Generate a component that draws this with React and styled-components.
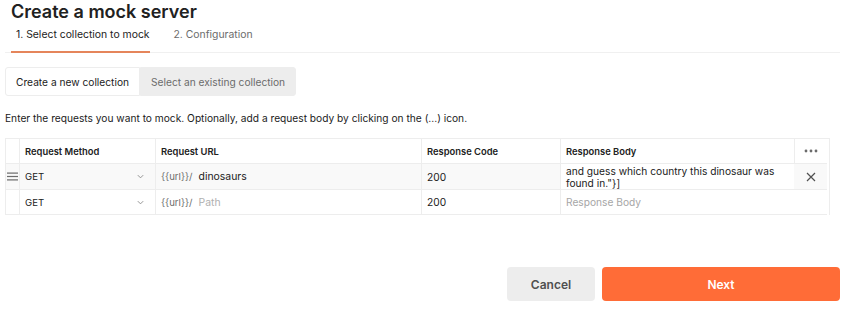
import React from 'react';
import styled, { createGlobalStyle } from 'styled-components';

const Global = createGlobalStyle`
  html, body { margin: 0; padding: 0; background: #fff; }
  body { font-family: Inter, "Noto Sans", sans-serif; color: #212121; }
`;

const Page = styled.div`
  width: 850px;
  height: 311px;
  box-sizing: border-box;
  padding: 0 10px 0 5px;
  display: flex;
  flex-direction: column;
`;

const Title = styled.h1`
  margin: 0;
  padding: 1px 0 0 6px;
  font-size: 18px;
  font-weight: 600;
  line-height: 22px;
  color: #212121;
`;

const Tabs = styled.div`
  display: flex;
  gap: 19px;
  padding-left: 6px;
  border-bottom: 1px solid #f0f0f0;
`;

const Tab = styled.div`
  font-size: 10.4px;
  line-height: 14px;
  padding: 5px 0 9px 5px;
  color: ${(p) => (p.active ? '#212121' : '#6b6b6b')};
  border-bottom: 2px solid ${(p) => (p.active ? '#e5855b' : 'transparent')};
  margin-bottom: -1px;
`;

const Segmented = styled.div`
  display: flex;
  align-self: flex-start;
  margin-top: 14px;
  height: 29px;
`;

const Segment = styled.div`
  display: flex;
  align-items: center;
  padding: 0 ${(p) => (p.active ? '10px' : '10px')};
  font-size: 10.2px;
  box-sizing: border-box;
  color: ${(p) => (p.active ? '#212121' : '#6b6b6b')};
  background: ${(p) => (p.active ? '#fff' : '#ededed')};
  border: 1px solid #ededed;
  border-radius: ${(p) => (p.active ? '3px 0 0 3px' : '0 3px 3px 0')};
`;

const Hint = styled.p`
  margin: 15px 0 0 0;
  font-size: 10.2px;
  line-height: 14px;
  color: #212121;
`;

const Table = styled.div`
  margin-top: 13px;
  width: 823px;
  border: 1px solid #ededed;
  border-bottom: none;
  display: grid;
  grid-template-columns: 13px 136px 266px 139px 234px 33px;
`;

const Cell = styled.div`
  box-sizing: border-box;
  height: ${(p) => p.h || 25}px;
  display: flex;
  align-items: center;
  padding: 0 5px;
  font-size: 10.2px;
  border-bottom: 1px solid #ededed;
  border-left: ${(p) => (p.first ? 'none' : '1px solid #ededed')};
  background: ${(p) => (p.hover ? '#f9f9f9' : '#fff')};
  color: ${(p) => (p.muted ? '#a6a6a6' : '#212121')};
  overflow: hidden;
`;

const HeadCell = styled(Cell)`
  font-weight: 600;
  font-size: 9.4px;
  color: #212121;
`;

const MethodCell = styled(Cell)`
  justify-content: space-between;
  padding-right: 10px;
  font-size: 9.6px;
`;

const Prefix = styled.span`
  color: #6b6b6b;
  font-size: 9.6px;
  margin-right: 6px;
`;

const UrlText = styled.span`
  color: ${(p) => (p.placeholder ? '#b0b0b0' : '#212121')};
  font-size: 10.4px;
`;

const BodyCell = styled(Cell)`
  font-size: 10.2px;
  line-height: 12px;
  align-items: flex-start;
  padding-top: 1px;
  color: #212121;
`;

const IconCell = styled(Cell)`
  justify-content: center;
  padding: 0;
  color: #6b6b6b;
  border-left: ${(p) => (p.noLeft ? 'none' : '1px solid #ededed')};
`;

const Footer = styled.div`
  margin-top: auto;
  display: flex;
  justify-content: flex-end;
  gap: 7px;
  padding-bottom: 10px;
`;

const Button = styled.button`
  height: 34px;
  border: none;
  border-radius: 4px;
  font-family: inherit;
  font-size: 12px;
  font-weight: 600;
  cursor: pointer;
  width: ${(p) => p.w}px;
  background: ${(p) => (p.primary ? '#ff6c37' : '#ededed')};
  color: ${(p) => (p.primary ? '#fff' : '#505050')};
`;

const Chevron = () => (
  <svg width="9" height="9" viewBox="0 0 10 10" fill="none" stroke="#8a8a8a" strokeWidth="1">
    <path d="M2 3.5 L5 6.5 L8 3.5" />
  </svg>
);

const Handle = () => (
  <svg width="11" height="9" viewBox="0 0 11 9" fill="#6b6b6b">
    <rect x="0" y="0.5" width="11" height="1.2" />
    <rect x="0" y="3.9" width="11" height="1.2" />
    <rect x="0" y="7.3" width="11" height="1.2" />
  </svg>
);

const Dots = () => (
  <svg width="14" height="4" viewBox="0 0 14 4" fill="#6b6b6b">
    <circle cx="2" cy="2" r="1.4" />
    <circle cx="7" cy="2" r="1.4" />
    <circle cx="12" cy="2" r="1.4" />
  </svg>
);

const Close = () => (
  <svg width="10" height="10" viewBox="0 0 10 10" stroke="#505050" strokeWidth="1.2">
    <path d="M1 1 L9 9 M9 1 L1 9" />
  </svg>
);

export default function App() {
  return (
    <>
      <Global />
      <Page>
        <Title>Create a mock server</Title>
        <Tabs>
          <Tab active>1. Select collection to mock</Tab>
          <Tab>2. Configuration</Tab>
        </Tabs>
        <Segmented>
          <Segment active>Create a new collection</Segment>
          <Segment>Select an existing collection</Segment>
        </Segmented>
        <Hint>Enter the requests you want to mock. Optionally, add a request body by clicking on the (...) icon.</Hint>
        <Table>
          <HeadCell first />
          <HeadCell>Request Method</HeadCell>
          <HeadCell>Request URL</HeadCell>
          <HeadCell>Response Code</HeadCell>
          <HeadCell>Response Body</HeadCell>
          <IconCell><Dots /></IconCell>

          <IconCell first hover h={26} noLeft><Handle /></IconCell>
          <MethodCell hover h={26}>GET <Chevron /></MethodCell>
          <Cell hover h={26}><Prefix>{'{{url}}/'}</Prefix><UrlText>dinosaurs</UrlText></Cell>
          <Cell hover h={26}>200</Cell>
          <BodyCell h={26}>and guess which country this dinosaur was found in."}]</BodyCell>
          <IconCell hover h={26} noLeft><Close /></IconCell>

          <Cell first />
          <MethodCell>GET <Chevron /></MethodCell>
          <Cell><Prefix>{'{{url}}/'}</Prefix><UrlText placeholder>Path</UrlText></Cell>
          <Cell>200</Cell>
          <Cell muted>Response Body</Cell>
          <IconCell noLeft />
        </Table>
        <Footer>
          <Button w={88}>Cancel</Button>
          <Button primary w={238}>Next</Button>
        </Footer>
      </Page>
    </>
  );
}
